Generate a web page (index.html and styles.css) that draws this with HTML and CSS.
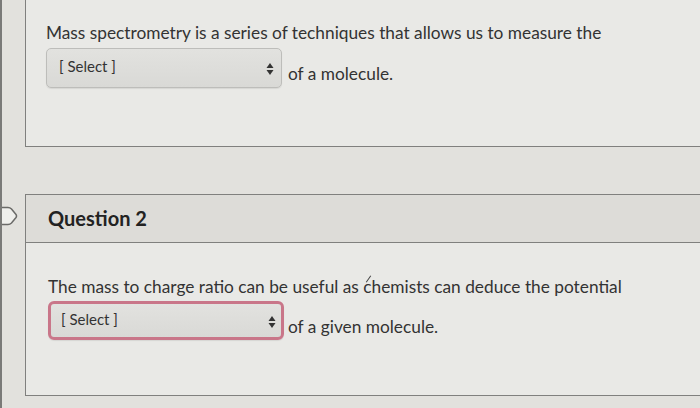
FILE: index.html
```html
<!DOCTYPE html>
<html lang="en">
<head>
  <meta charset="UTF-8">
  <title>Quiz - Mass spectrometry</title>
  <link rel="stylesheet" href="styles.css">
</head>
<body>
  <div class="quiz">

    <div class="question question-first">
      <div class="question-body">
        <div class="prompt">Mass spectrometry is a series of techniques that allows us to measure the</div>
        <div class="answer-row">
          <div class="select">
            <span>[ Select ]</span>
            <svg class="arrows" width="8" height="14" viewBox="0 0 8 14">
              <path d="M4 1 L7.5 6 L0.5 6 Z" fill="#333"/>
              <path d="M4 13 L7.5 8 L0.5 8 Z" fill="#333"/>
            </svg>
          </div>
          <div class="after">of a molecule.</div>
        </div>
      </div>
    </div>

    <div class="question">
      <svg class="flag" width="18" height="20" viewBox="0 0 18 20">
        <path d="M-4 1.5 H8 Q10 1.5 11.5 3 L16 8.5 Q17 10 16 11.5 L11.5 17 Q10 18.5 8 18.5 H-4" fill="#efefec" stroke="#6a6a68" stroke-width="1.5"/>
      </svg>
      <div class="question-header">Question 2</div>
      <div class="question-body body-second">
        <div class="prompt">The mass to charge ratio can be useful as <span class="tick">c</span>hemists can deduce the potential</div>
        <div class="answer-row">
          <div class="select select-focus">
            <span>[ Select ]</span>
            <svg class="arrows" width="8" height="14" viewBox="0 0 8 14">
              <path d="M4 1 L7.5 6 L0.5 6 Z" fill="#333"/>
              <path d="M4 13 L7.5 8 L0.5 8 Z" fill="#333"/>
            </svg>
          </div>
          <div class="after">of a given molecule.</div>
        </div>
      </div>
    </div>

  </div>
</body>
</html>
```

FILE: styles.css
```css
html, body {
  height: 100%;
}

body {
  margin: 0;
  font-family: Lato, 'Noto Sans', sans-serif;
  background: #e2e1dd;
  color: #333;
  overflow: hidden;
  border-left: 2px solid #7a7a78;
}

.quiz {
  padding-left: 23px;
}

.question {
  position: relative;
  background: #e9e9e6;
  border: 1px solid #80807e;
  border-right: none;
  margin-top: 47px;
}

.question-first {
  margin-top: 0;
  border-top: none;
}

.flag {
  position: absolute;
  left: -26px;
  top: 11px;
}

.question-header {
  height: 47px;
  line-height: 47px;
  padding-left: 22px;
  font-size: 20px;
  font-weight: 700;
  color: #222;
  background: #dddcd8;
  border-bottom: 1px solid #80807e;
}

.question-body {
  padding: 21px 0 58px 20px;
}

.body-second {
  padding: 32px 0 55px 22px;
}

.prompt {
  font-size: 17.3px;
  line-height: 24px;
  white-space: nowrap;
}

.tick {
  position: relative;
}

.tick::before {
  content: "";
  position: absolute;
  left: 5px;
  top: -1px;
  width: 1px;
  height: 8px;
  background: #444;
  transform: rotate(35deg);
}

.answer-row {
  display: flex;
  align-items: flex-start;
  margin-top: 3px;
}

.select {
  box-sizing: border-box;
  width: 236px;
  height: 40px;
  display: flex;
  justify-content: space-between;
  padding: 8px 7px 0 12px;
  font-size: 15px;
  color: #333;
  background: linear-gradient(#e2e2df, #d9d9d6);
  border: 1px solid #bdbdba;
  border-radius: 5px;
  box-shadow: 0 1px 1px rgba(0, 0, 0, 0.08);
}

.select .arrows {
  margin-top: 5px;
}

.select-focus {
  height: 39px;
  border: 3px solid #c97689;
  border-radius: 6px;
  padding: 6px 5px 0 10px;
  margin-top: -1px;
}

.select-focus .arrows {
  margin-top: 5px;
}

.after {
  font-size: 17.3px;
  line-height: 24px;
  margin-top: 14px;
  margin-left: 6px;
}

.select-focus + .after {
  margin-left: 4px;
  margin-top: 13px;
}
```
